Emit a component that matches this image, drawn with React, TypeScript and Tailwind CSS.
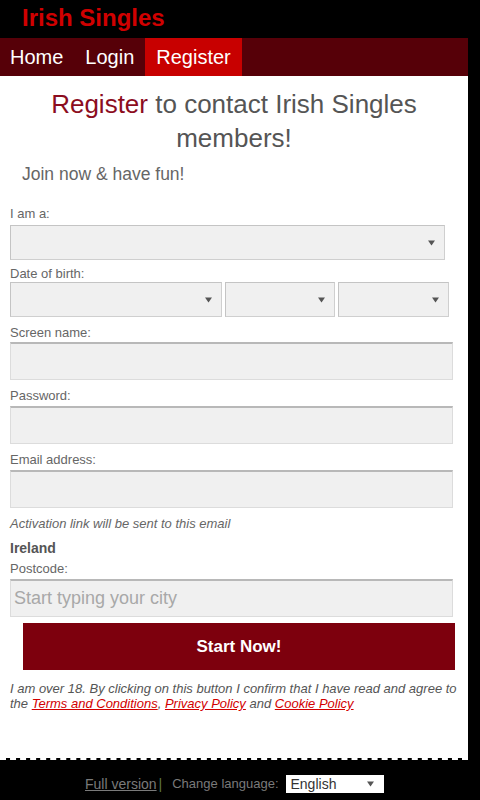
import React from 'react';

const font = { fontFamily: '"Liberation Sans", Arial, sans-serif' };

const Arrow = ({ className = '' }: { className?: string }) => (
  <svg width="7" height="6" viewBox="0 0 7 6" className={className}>
    <path d="M0 0.5h7L3.5 5.5z" fill="#555" />
  </svg>
);

const SelectBox = ({ className }: { className: string }) => (
  <div
    className={`flex h-[35px] items-center justify-end border border-[#cfcfcf] border-t-[#c4c4c4] border-l-[#c4c4c4] bg-[#f0f0f0] pr-[9px] ${className}`}
  >
    <Arrow />
  </div>
);

const InputBox = ({ className = '', placeholder }: { className?: string; placeholder?: string }) => (
  <div
    className={`flex h-[38px] w-[443px] items-center border-x border-b border-[#dcdcdc] border-t-2 border-t-[#b8b8b8] bg-[#f0f0f0] px-[3px] text-[18px] text-[#a8a8a8] ${className}`}
  >
    {placeholder}
  </div>
);

const Label = ({ children, className = '' }: { children: React.ReactNode; className?: string }) => (
  <div className={`text-[13px] leading-[15px] text-[#666] ${className}`}>{children}</div>
);

export default function App() {
  return (
    <div className="flex h-[800px] w-[480px] flex-col overflow-hidden bg-black" style={font}>
      {/* Site title */}
      <div className="h-[38px] pl-[22px] pt-[4px] text-[24px] font-bold leading-[28px] text-[#d00000]">
        Irish Singles
      </div>

      {/* Nav */}
      <nav className="flex h-[38px] w-[468px] items-stretch bg-[#560008] text-[20px] text-white">
        <a className="flex items-center pl-[10px] pr-[11px]">Home</a>
        <a className="flex items-center px-[11px]">Login</a>
        <a className="flex items-center bg-[#c80000] px-[11px]">Register</a>
      </nav>

      {/* Form panel */}
      <div className="flex h-[684px] w-[468px] flex-col border-b-2 border-dashed border-white bg-white bg-clip-padding pl-[10px]">
        <h1 className="mt-[11px] pr-[10px] text-center text-[26px] leading-[34px] text-[#555]">
          <span className="text-[#8c0d1e]">Register</span> to contact Irish Singles
          <br />
          members!
        </h1>
        <div className="mt-[9px] pl-[12px] text-[17.5px] leading-[20px] text-[#666]">Join now &amp; have fun!</div>

        <Label className="mt-[22px]">I am a:</Label>
        <SelectBox className="mt-[4px] w-[435px]" />

        <Label className="mt-[6px]">Date of birth:</Label>
        <div className="mt-[1px] flex gap-[3px]">
          <SelectBox className="w-[212px]" />
          <SelectBox className="w-[110px]" />
          <SelectBox className="w-[111px]" />
        </div>

        <Label className="mt-[8px]">Screen name:</Label>
        <InputBox className="mt-[2px]" />

        <Label className="mt-[8px]">Password:</Label>
        <InputBox className="mt-[3px]" />

        <Label className="mt-[8px]">Email address:</Label>
        <InputBox className="mt-[3px]" />

        <Label className="mt-[8px] italic">Activation link will be sent to this email</Label>
        <div className="mt-[9px] text-[14px] font-bold leading-[16px] text-[#555]">Ireland</div>
        <Label className="mt-[5px]">Postcode:</Label>
        <InputBox className="mt-[3px]" placeholder="Start typing your city" />

        <button className="ml-[13px] mt-[6px] h-[47px] w-[432px] bg-[#7d000d] text-[17px] font-bold text-white">
          Start Now!
        </button>

        <p className="mt-[11px] whitespace-nowrap text-[13px] italic leading-[15px] text-[#555]">
          I am over 18. By clicking on this button I confirm that I have read and agree to
          <br />
          the{' '}
          <a className="text-[#d20000] underline">Terms and Conditions</a>,{' '}
          <a className="text-[#d20000] underline">Privacy Policy</a> and{' '}
          <a className="text-[#d20000] underline">Cookie Policy</a>
        </p>
      </div>

      {/* Footer */}
      <footer className="flex flex-1 items-center pl-[85px] pt-[8px] text-[#7a7a7a]">
        <a className="text-[14px] underline">Full version</a>
        <span className="ml-[2px] text-[14px] text-[#5d7a45]">|</span>
        <span className="ml-[10px] text-[13px]">Change language:</span>
        <div className="ml-[7px] flex h-[18px] w-[98px] items-center justify-between bg-white pl-[5px] pr-[10px] text-[14px] text-[#333]">
          English
          <Arrow />
        </div>
      </footer>
    </div>
  );
}
